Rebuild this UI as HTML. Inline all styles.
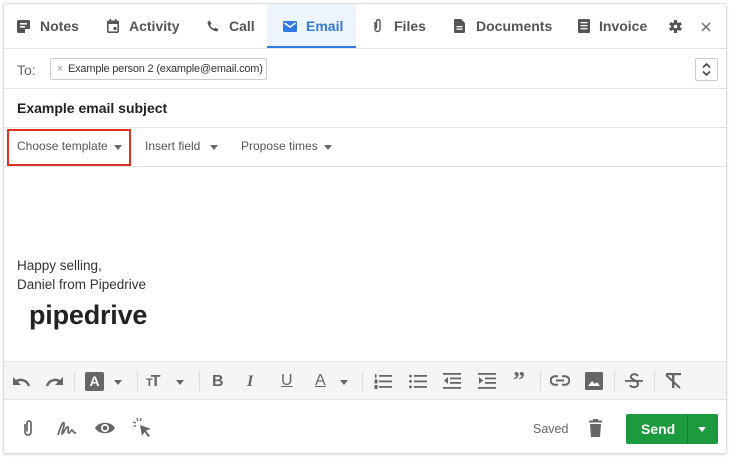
<!DOCTYPE html>
<html><head><meta charset="utf-8">
<style>
*{box-sizing:border-box;margin:0;padding:0}
body{width:730px;height:457px;background:#fff;font-family:"Liberation Sans",sans-serif;color:#333;position:relative;overflow:hidden}
.card{position:absolute;left:3px;top:3px;width:724px;height:451px;border:1px solid #ddd;border-radius:3px;box-shadow:0 1px 2px rgba(0,0,0,.15)}
.abs{position:absolute}
.t{position:absolute;top:18px;font-size:14px;font-weight:bold;color:#555;white-space:nowrap}
svg{position:absolute}
.sep{position:absolute;top:371px;width:1px;height:20px;background:#ddd}
.car{position:absolute;width:0;height:0;border-left:4px solid transparent;border-right:4px solid transparent;border-top:5px solid #666}
.tp{position:absolute;top:139px;font-size:12px;color:#555;white-space:nowrap}
</style></head><body>
<div class="card"></div>
<div class="abs" style="left:267px;top:4px;width:89px;height:44px;background:#eef4fb;border-bottom:2px solid #317ae2"></div>
<div class="abs" style="left:4px;top:48px;width:722px;height:1px;background:#e3e3e3"></div>
<svg style="left:17px;top:20px" width="13" height="13" viewBox="0 0 13 13"><rect x="0" y="0" width="13" height="13" rx="1.5" fill="#555"/><rect x="3" y="3" width="7" height="1.6" fill="#fff"/><rect x="3" y="6" width="5" height="1.6" fill="#fff"/><rect x="8" y="9" width="5" height="4" fill="#fff"/></svg>
<span class="t" style="left:40px">Notes</span>
<svg style="left:107px;top:19px" width="12" height="14" viewBox="0 0 12 14"><rect x="0.8" y="2.3" width="10.4" height="10.9" rx="1" fill="none" stroke="#555" stroke-width="1.6"/><rect x="0" y="2" width="12" height="3" fill="#555"/><rect x="2.5" y="0" width="1.6" height="3" fill="#555"/><rect x="7.9" y="0" width="1.6" height="3" fill="#555"/><rect x="6.5" y="8" width="3" height="3" fill="#555"/></svg>
<span class="t" style="left:129px">Activity</span>
<svg style="left:207px;top:20px" width="12" height="12" viewBox="0 0 12 12"><path d="M2.5 0.5 L4.5 3.5 L3.2 5 C4 7 5 8 7 8.8 L8.5 7.5 L11.5 9.5 L10 11.5 C5 11 1 7 0.5 2 Z" fill="#555"/></svg>
<span class="t" style="left:229px">Call</span>
<svg style="left:283px;top:21px" width="14" height="11" viewBox="0 0 14 11"><rect width="14" height="11" rx="1.2" fill="#317ae2"/><path d="M1.5 2 L7 6 L12.5 2" stroke="#fff" stroke-width="1.6" fill="none"/></svg>
<span class="t" style="left:306px;color:#317ae2">Email</span>
<svg style="left:373px;top:18px" width="9" height="15" viewBox="0 0 9 15"><path d="M2 4 V11 A2.5 2.5 0 0 0 7 11 V3 A1.8 1.8 0 0 0 3.5 3 V10.5" fill="none" stroke="#555" stroke-width="1.4"/></svg>
<span class="t" style="left:394px">Files</span>
<svg style="left:454px;top:19px" width="11" height="14" viewBox="0 0 11 14"><path d="M0 1 Q0 0 1 0 H7 L11 4 V13 Q11 14 10 14 H1 Q0 14 0 13Z" fill="#555"/><rect x="2.5" y="7" width="6" height="1.3" fill="#fff"/><rect x="2.5" y="9.5" width="6" height="1.3" fill="#fff"/></svg>
<span class="t" style="left:476px">Documents</span>
<svg style="left:578px;top:19px" width="12" height="14" viewBox="0 0 12 14"><rect width="12" height="14" rx="1" fill="#555"/><rect x="2.5" y="3" width="7" height="1.3" fill="#fff"/><rect x="2.5" y="6" width="7" height="1.3" fill="#fff"/><rect x="2.5" y="9" width="7" height="1.3" fill="#fff"/></svg>
<span class="t" style="left:599px">Invoice</span>
<svg style="left:669px;top:20px" width="13" height="13" viewBox="-6.5 -6.5 13 13"><g fill="#555"><circle r="4.5"/><rect x="-1.6" y="-6.5" width="3.2" height="13"/><rect x="-1.6" y="-6.5" width="3.2" height="13" transform="rotate(60)"/><rect x="-1.6" y="-6.5" width="3.2" height="13" transform="rotate(120)"/></g><circle r="1.8" fill="#fff"/></svg>
<svg style="left:701px;top:22px" width="10" height="10" viewBox="0 0 10 10"><path d="M1 1L9 9M9 1L1 9" stroke="#666" stroke-width="1.3"/></svg>
<span class="abs" style="left:17px;top:62px;font-size:14px;color:#666">To:</span>
<div class="abs" style="left:50px;top:58px;width:217px;height:22px;border:1px solid #ccc;border-radius:2px"></div>
<span class="abs" style="left:57px;top:63px;font-size:11px;color:#999">×</span>
<span class="abs" style="left:68px;top:63px;font-size:11px;color:#333;letter-spacing:-0.2px">Example person 2 (example@email.com)</span>
<div class="abs" style="left:695px;top:58px;width:23px;height:23px;border:1px solid #ccc;border-radius:2px"></div>
<svg style="left:701px;top:62px" width="11" height="15" viewBox="0 0 11 15"><path d="M2 5.5 L5.5 2 L9 5.5 M2 9.5 L5.5 13 L9 9.5" stroke="#444" stroke-width="1.6" fill="none"/></svg>
<div class="abs" style="left:4px;top:88px;width:722px;height:1px;background:#e3e3e3"></div>
<span class="abs" style="left:17px;top:100px;font-size:14px;font-weight:bold;color:#222">Example email subject</span>
<div class="abs" style="left:4px;top:127px;width:722px;height:1px;background:#e3e3e3"></div>
<div class="abs" style="left:7px;top:129px;width:124px;height:37px;border:2px solid #e0301e"></div>
<span class="tp" style="left:17px">Choose template</span><div class="car" style="left:114px;top:145px"></div>
<span class="tp" style="left:145px">Insert field</span><div class="car" style="left:210px;top:145px"></div>
<span class="tp" style="left:241px">Propose times</span><div class="car" style="left:324px;top:145px"></div>
<div class="abs" style="left:4px;top:166px;width:722px;height:1px;background:#e3e3e3"></div>
<div class="abs" style="left:17px;top:256px;font-size:13.5px;line-height:19px;color:#333">Happy selling,<br>Daniel from Pipedrive</div>
<span class="abs" style="left:29px;top:300px;font-size:27px;font-weight:bold;color:#222;letter-spacing:-0.2px">pipedrive</span>
<div class="abs" style="left:4px;top:361px;width:722px;height:39px;background:#f5f5f5;border-top:1px solid #e3e3e3;border-bottom:1px solid #e3e3e3"></div>
<svg style="left:12px;top:375px" width="19" height="12" viewBox="0 0 19 12"><path d="M17 11 C15 5 8 3 3.5 7" stroke="#666" stroke-width="2.4" fill="none"/><path d="M1 2 V10 H9Z" fill="#666"/></svg>
<svg style="left:45px;top:375px" width="19" height="12" viewBox="0 0 19 12"><path d="M2 11 C4 5 11 3 15.5 7" stroke="#666" stroke-width="2.4" fill="none"/><path d="M18 2 V10 H10Z" fill="#666"/></svg>
<div class="sep" style="left:74px"></div>
<div class="abs" style="left:85px;top:372px;width:19px;height:19px;background:#666;border-radius:2px;color:#fff;font-weight:bold;font-size:14px;text-align:center;line-height:19px">A</div>
<div class="car" style="left:114px;top:380px"></div>
<div class="sep" style="left:137px"></div>
<span class="abs" style="left:146px;top:373px;font-weight:bold;color:#666;font-size:16px;letter-spacing:-2px"><span style="font-size:11px">T</span>T</span>
<div class="car" style="left:176px;top:380px"></div>
<div class="sep" style="left:199px"></div>
<span class="abs" style="left:212px;top:373px;font-weight:bold;color:#666;font-size:16px">B</span>
<span class="abs" style="left:247px;top:373px;font-weight:bold;font-style:italic;color:#666;font-size:16px;font-family:'Liberation Serif',serif">I</span>
<span class="abs" style="left:281px;top:372px;color:#666;font-size:16px;text-decoration:underline">U</span>
<span class="abs" style="left:315px;top:372px;color:#666;font-size:16px;text-decoration:underline">A</span>
<div class="car" style="left:340px;top:380px"></div>
<div class="sep" style="left:362px"></div>
<svg style="left:374px;top:374px" width="18" height="15" viewBox="0 0 18 15"><g fill="#666"><rect x="5" y="1" width="13" height="1.8"/><rect x="5" y="6.5" width="13" height="1.8"/><rect x="5" y="12" width="13" height="1.8"/><rect x="1" y="0" width="1.5" height="4"/><rect x="0.5" y="5.5" width="3" height="4"/><rect x="0.5" y="11" width="3" height="4"/></g></svg>
<svg style="left:409px;top:374px" width="18" height="15" viewBox="0 0 18 15"><g fill="#666"><rect x="5" y="1" width="13" height="1.8"/><rect x="5" y="6.5" width="13" height="1.8"/><rect x="5" y="12" width="13" height="1.8"/><circle cx="1.5" cy="2" r="1.4"/><circle cx="1.5" cy="7.4" r="1.4"/><circle cx="1.5" cy="12.9" r="1.4"/></g></svg>
<svg style="left:443px;top:373px" width="18" height="16" viewBox="0 0 18 16"><g fill="#666"><rect x="0" y="0" width="18" height="1.8"/><rect x="7" y="4.5" width="11" height="1.8"/><rect x="7" y="9" width="11" height="1.8"/><rect x="0" y="14" width="18" height="1.8"/><path d="M5 4 V11 L1 7.5Z"/></g></svg>
<svg style="left:478px;top:373px" width="18" height="16" viewBox="0 0 18 16"><g fill="#666"><rect x="0" y="0" width="18" height="1.8"/><rect x="7" y="4.5" width="11" height="1.8"/><rect x="7" y="9" width="11" height="1.8"/><rect x="0" y="14" width="18" height="1.8"/><path d="M1 4 V11 L5 7.5Z"/></g></svg>
<span class="abs" style="left:513px;top:368px;font-weight:bold;color:#666;font-size:24px;font-family:'Liberation Serif',serif">”</span>
<div class="sep" style="left:540px"></div>
<svg style="left:550px;top:375px" width="20" height="11" viewBox="0 0 20 11"><path d="M8 1.2 H5 A4.3 4.3 0 0 0 5 9.8 H8 M12 1.2 H15 A4.3 4.3 0 0 1 15 9.8 H12 M6 5.5 H14" stroke="#666" stroke-width="2" fill="none"/></svg>
<svg style="left:585px;top:372px" width="18" height="18" viewBox="0 0 18 18"><rect width="18" height="18" rx="1.5" fill="#666"/><path d="M3 14 L7 9 L10 12 L12 10 L15 14Z" fill="#fff"/></svg>
<div class="sep" style="left:614px"></div>
<svg style="left:625px;top:373px" width="18" height="16" viewBox="0 0 18 16"><path d="M13 3 C11 0 5 1 6 4.5 C7 7 13 7.5 13 11 C13 15 6 15 5 12" stroke="#666" stroke-width="2" fill="none"/><rect x="0" y="7" width="18" height="1.8" fill="#666"/></svg>
<div class="sep" style="left:654px"></div>
<svg style="left:664px;top:373px" width="18" height="16" viewBox="0 0 18 16"><g fill="#666"><rect x="2" y="0" width="15" height="2.2"/><rect x="8" y="0" width="2.4" height="15"/></g><path d="M2 2 L16 15" stroke="#666" stroke-width="2"/></svg>
<svg style="left:23px;top:419px" width="10" height="18" viewBox="0 0 10 18"><path d="M2 5 V13 A3 3 0 0 0 8 13 V4 A2 2 0 0 0 4 4 V12.5" fill="none" stroke="#666" stroke-width="1.7"/></svg>
<svg style="left:57px;top:420px" width="20" height="16" viewBox="0 0 20 16"><path d="M1 15 C3 8 6 1 7 3 C8 6 4 13 5 14 C7 13 9 6 11 7 C12 9 10 13 12 13 C13 13 14 10 15 10 C16 10 16 13 19 13" stroke="#666" stroke-width="1.7" fill="none"/></svg>
<svg style="left:94px;top:421px" width="22" height="14" viewBox="0 0 22 14"><path d="M1 7 C5 0 17 0 21 7 C17 14 5 14 1 7Z" fill="#666"/><circle cx="11" cy="7" r="4" fill="#fff"/><circle cx="11" cy="7" r="2.3" fill="#666"/></svg>
<svg style="left:132px;top:417px" width="22" height="22" viewBox="0 0 22 22"><path d="M8 8 L19 12 L14 13.5 L18 19 L16 20 L12.5 15 L10 19Z" fill="#666"/><g stroke="#666" stroke-width="1.3"><path d="M5 1 L6 4"/><path d="M1 5 L4 6"/><path d="M9 1 L8.5 4"/><path d="M1.5 9.5 L4 8.5"/></g></svg>
<span class="abs" style="left:533px;top:422px;font-size:12.5px;color:#666">Saved</span>
<svg style="left:589px;top:419px" width="13" height="18" viewBox="0 0 13 18"><rect x="0" y="1.5" width="13" height="2" fill="#666"/><rect x="4" y="0" width="5" height="2" fill="#666"/><path d="M1 5 H12 L11 18 H2Z" fill="#666"/></svg>
<div class="abs" style="left:626px;top:414px;width:92px;height:30px;background:#1c9a3e;border-radius:2px"></div>
<div class="abs" style="left:687px;top:414px;width:1px;height:30px;background:#158032"></div>
<span class="abs" style="left:641px;top:421px;font-size:14px;font-weight:bold;color:#fff">Send</span>
<div class="car" style="left:698px;top:427px;border-top-color:#fff"></div>
</body></html>
